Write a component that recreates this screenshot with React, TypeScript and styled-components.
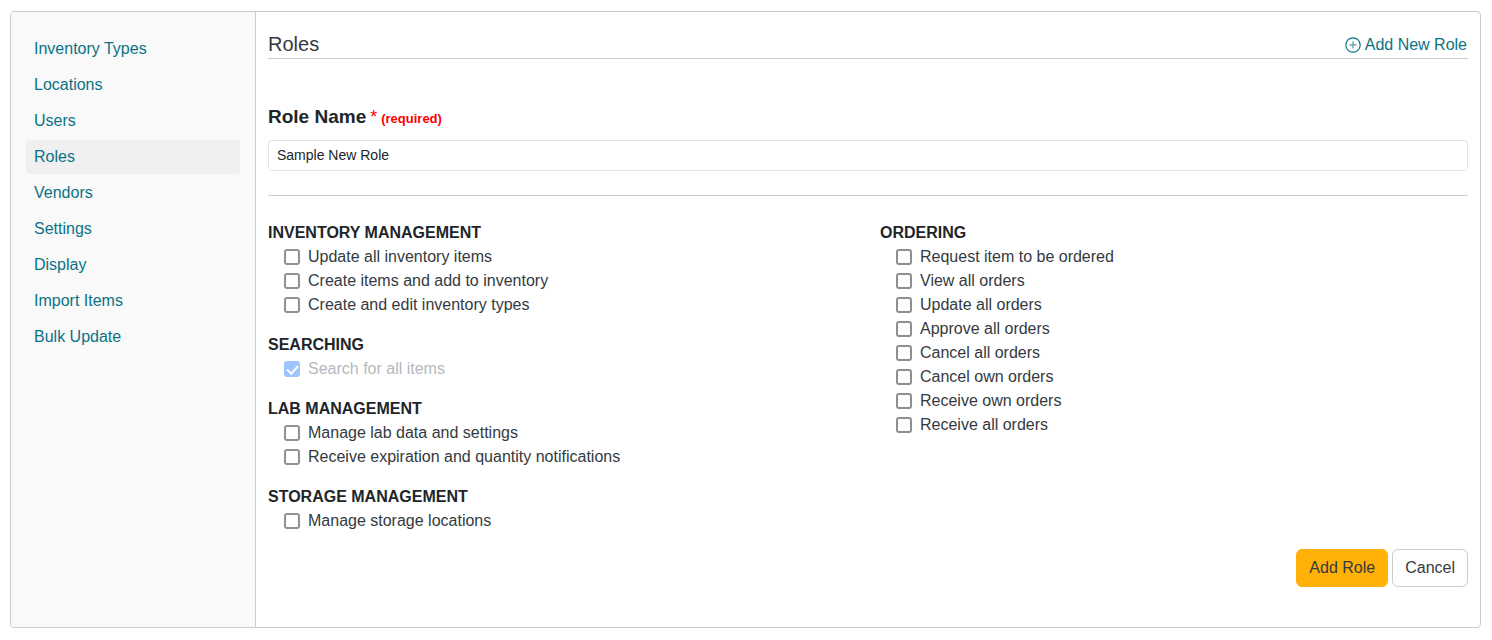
import React from "react";
import styled, { createGlobalStyle } from "styled-components";

const GlobalStyle = createGlobalStyle`
    html, body {
        margin: 0;
        padding: 0;
        background: #fff;
        font-family: "Liberation Sans", Arial, sans-serif;
        color: #212529;
    }
    * {
        box-sizing: border-box;
    }
`;

const Page = styled.div`
    width: 1492px;
    height: 640px;
    padding: 11px 11px 12px 10px;
`;

const Shell = styled.div`
    display: flex;
    height: 617px;
    border: 1px solid #ccc;
    border-radius: 4px;
    overflow: hidden;
`;

const Sidebar = styled.nav`
    flex: 0 0 245px;
    display: flex;
    flex-direction: column;
    padding: 19px 15px 0 15px;
    background: #f9f9f9;
    border-right: 1px solid #ccc;
`;

const NavItem = styled.a<{ $active?: boolean }>`
    display: block;
    height: 34px;
    margin: 1px 0;
    padding: 0 8px;
    border-radius: 4px;
    font-size: 16px;
    line-height: 34px;
    color: #0b7285;
    background: ${(props) => (props.$active ? "#f0f0f0" : "transparent")};
`;

const Main = styled.main`
    flex: 1;
    display: flex;
    flex-direction: column;
    padding: 18px 12px 0 12px;
`;

const Header = styled.div`
    display: flex;
    align-items: center;
    justify-content: space-between;
    height: 29px;
    border-bottom: 1px solid #ccc;
`;

const Title = styled.h2`
    margin: 0;
    font-size: 20px;
    font-weight: 400;
    line-height: 29px;
    color: #343a40;
`;

const AddLink = styled.a`
    display: flex;
    align-items: center;
    gap: 4px;
    padding: 1px 1px 0 0;
    font-size: 16px;
    color: #0b7285;
`;

const FieldLabel = styled.div`
    display: flex;
    align-items: baseline;
    height: 24px;
    margin-top: 46px;
    font-size: 19px;
    font-weight: 700;
    line-height: 24px;
`;

const Star = styled.span`
    margin: 0 4px 0 4px;
    color: #f00;
    font-size: 18px;
    font-weight: 400;
`;

const Required = styled.span`
    color: #f00;
    font-size: 13px;
    font-weight: 700;
`;

const NameInput = styled.input`
    display: block;
    width: 100%;
    height: 31px;
    margin-top: 11px;
    padding: 0 8px 2px 8px;
    border: 1px solid #dee2e6;
    border-radius: 4px;
    font-family: inherit;
    font-size: 14px;
    color: #212529;
    outline: none;
`;

const Divider = styled.hr`
    width: 100%;
    height: 1px;
    margin: 24px 0 0 0;
    border: 0;
    background: #ccc;
`;

const Columns = styled.div`
    display: grid;
    grid-template-columns: 612px 1fr;
    margin-top: 25px;
`;

const Column = styled.div`
    display: flex;
    flex-direction: column;
    gap: 16px;
`;

const Group = styled.section`
    display: flex;
    flex-direction: column;
`;

const GroupTitle = styled.div`
    height: 24px;
    font-size: 16px;
    font-weight: 700;
    line-height: 24px;
    color: #212529;
`;

const Row = styled.label<{ $disabled?: boolean }>`
    display: flex;
    align-items: center;
    gap: 8px;
    height: 24px;
    padding-left: 16px;
    font-size: 16px;
    color: ${(props) => (props.$disabled ? "#b5b9bd" : "#343a40")};
`;

const Box = styled.input`
    appearance: none;
    position: relative;
    width: 16px;
    height: 16px;
    margin: 0;
    background: #fff;
    border: 2px solid #8f8f8f;
    border-radius: 3px;

    &:checked {
        background: #9ec5fe;
        border-color: #9ec5fe;
    }

    &:checked::after {
        content: "";
        position: absolute;
        left: 3px;
        top: 0;
        width: 5px;
        height: 9px;
        border: solid #fff;
        border-width: 0 2px 2px 0;
        transform: rotate(42deg);
    }
`;

const Actions = styled.div`
    display: flex;
    justify-content: flex-end;
    gap: 4px;
    margin-top: 16px;
`;

const Button = styled.button<{ $primary?: boolean }>`
    height: 38px;
    padding: 0 12px;
    border: 1px solid ${(props) => (props.$primary ? "#ffb108" : "#ccc")};
    border-radius: 6px;
    background: ${(props) => (props.$primary ? "#ffb108" : "#fff")};
    font-family: inherit;
    font-size: 16px;
    color: #343a40;
`;

const navItems = [
    "Inventory Types",
    "Locations",
    "Users",
    "Roles",
    "Vendors",
    "Settings",
    "Display",
    "Import Items",
    "Bulk Update",
];

type GroupData = {
    title: string;
    items: string[];
    locked?: boolean;
};

const leftGroups: GroupData[] = [
    {
        title: "INVENTORY MANAGEMENT",
        items: [
            "Update all inventory items",
            "Create items and add to inventory",
            "Create and edit inventory types",
        ],
    },
    { title: "SEARCHING", items: ["Search for all items"], locked: true },
    {
        title: "LAB MANAGEMENT",
        items: [
            "Manage lab data and settings",
            "Receive expiration and quantity notifications",
        ],
    },
    { title: "STORAGE MANAGEMENT", items: ["Manage storage locations"] },
];

const rightGroups: GroupData[] = [
    {
        title: "ORDERING",
        items: [
            "Request item to be ordered",
            "View all orders",
            "Update all orders",
            "Approve all orders",
            "Cancel all orders",
            "Cancel own orders",
            "Receive own orders",
            "Receive all orders",
        ],
    },
];

const PlusCircle = () => (
    <svg width="16" height="16" viewBox="0 0 16 16" fill="none">
        <circle cx="8" cy="8" r="7.2" stroke="#0b7285" strokeWidth="1.2" />
        <path d="M8 4.4v7.2M4.4 8h7.2" stroke="#6ba9b5" strokeWidth="1.5" />
    </svg>
);

const renderGroups = (groups: GroupData[]) =>
    groups.map((group) => (
        <Group key={group.title}>
            <GroupTitle>{group.title}</GroupTitle>
            {group.items.map((item) => (
                <Row key={item} $disabled={group.locked}>
                    <Box
                        type="checkbox"
                        disabled={group.locked}
                        defaultChecked={group.locked}
                    />
                    {item}
                </Row>
            ))}
        </Group>
    ));

export default function App() {
    return (
        <Page>
            <GlobalStyle />
            <Shell>
                <Sidebar>
                    {navItems.map((item) => (
                        <NavItem key={item} $active={item === "Roles"}>
                            {item}
                        </NavItem>
                    ))}
                </Sidebar>
                <Main>
                    <Header>
                        <Title>Roles</Title>
                        <AddLink>
                            <PlusCircle />
                            Add New Role
                        </AddLink>
                    </Header>
                    <FieldLabel>
                        Role Name
                        <Star>*</Star>
                        <Required>(required)</Required>
                    </FieldLabel>
                    <NameInput defaultValue="Sample New Role" />
                    <Divider />
                    <Columns>
                        <Column>{renderGroups(leftGroups)}</Column>
                        <Column>{renderGroups(rightGroups)}</Column>
                    </Columns>
                    <Actions>
                        <Button $primary>Add Role</Button>
                        <Button>Cancel</Button>
                    </Actions>
                </Main>
            </Shell>
        </Page>
    );
}
